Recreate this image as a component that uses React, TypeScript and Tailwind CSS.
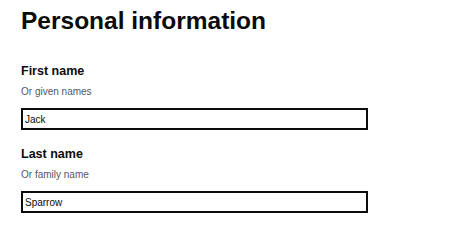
import React from "react";

function Field({ label, hint, value, first }: { label: string; hint: string; value: string; first?: boolean }) {
  return (
    <div className={first ? "mt-[27px]" : "mt-[16px]"}>
      <label className="block text-[12.5px] leading-[16px] font-bold text-[#0b0c0c]">{label}</label>
      <div className="mt-[7px] text-[10px] leading-[12px] text-[#505a5f]">{hint}</div>
      <input
        readOnly
        value={value}
        className="mt-[10px] block w-[347px] h-[22px] border-2 border-[#0b0c0c] bg-white pl-[2px] text-[10px] text-[#0b0c0c] outline-none"
        style={{ fontFamily: '"Liberation Sans", Arial, sans-serif' }}
      />
    </div>
  );
}

export default function App() {
  return (
    <div
      className="w-[474px] h-[220px] bg-white pl-[21px] pt-[6px] overflow-hidden"
      style={{ fontFamily: '"Liberation Sans", Arial, sans-serif' }}
    >
      <h1 className="text-[24.5px] leading-[30px] font-bold text-[#0b0c0c]">Personal information</h1>
      <Field first label="First name" hint="Or given names" value="Jack" />
      <Field label="Last name" hint="Or family name" value="Sparrow" />
    </div>
  );
}
